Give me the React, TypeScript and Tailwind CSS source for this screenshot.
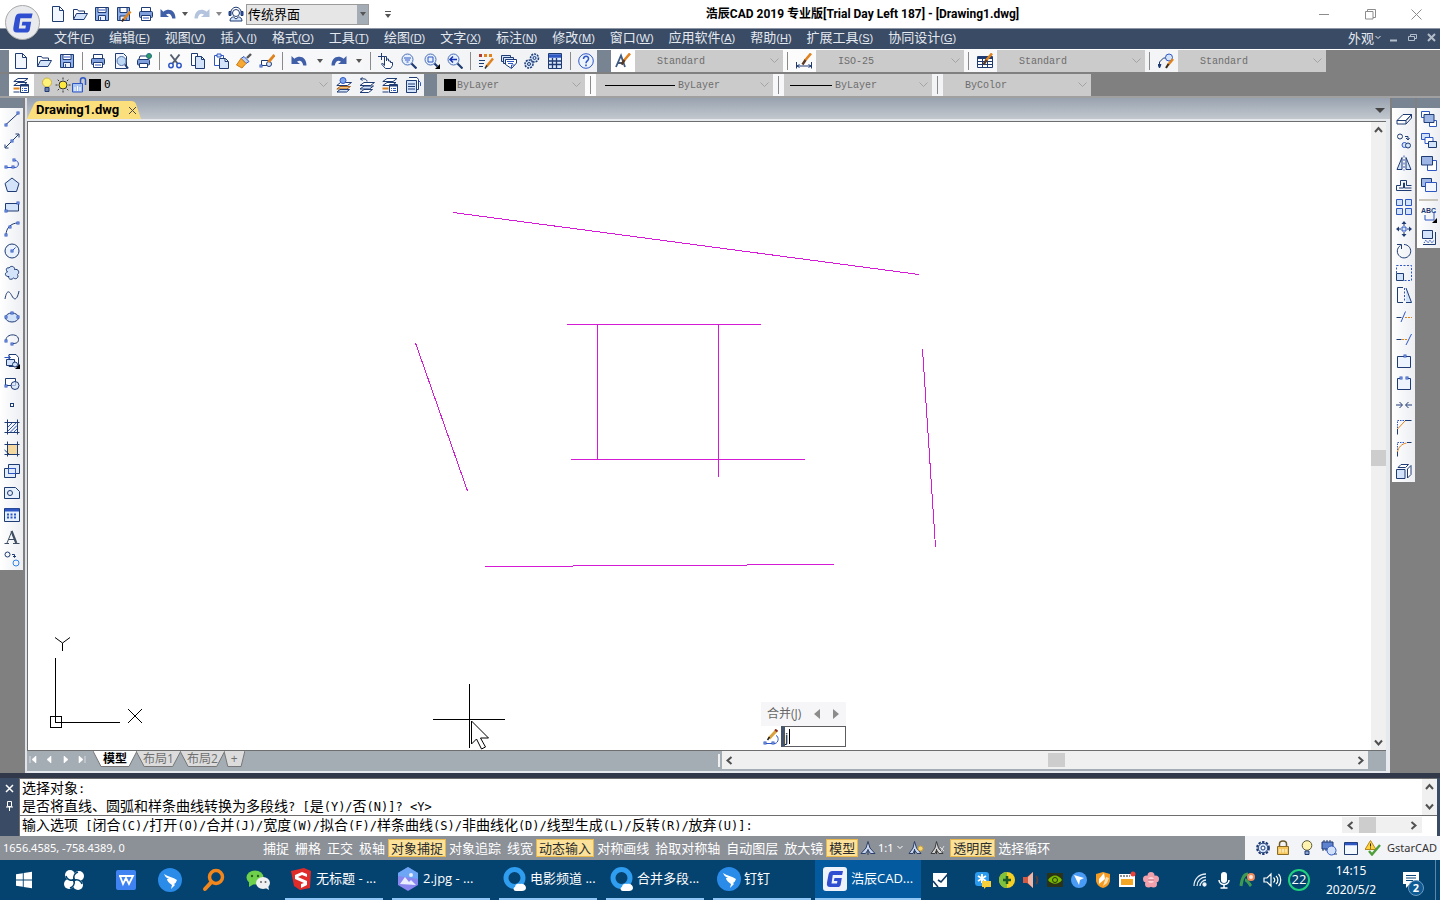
import type { ReactNode } from "react";

// Shared icon colors
const N = "#1f3b73"; // navy outline
const B = "#2f57c4"; // bright blue
const L = "#d3e3fa"; // light fill
const O = "#e0821e"; // orange

function Icon({ name, size = 16 }: { name: string; size?: number }) {
  return (
    <svg
      width={size}
      height={size}
      viewBox="0 0 16 16"
      fill="none"
      stroke={N}
      className="shrink-0"
      aria-hidden="true"
    >
      {ICONS[name]}
    </svg>
  );
}

const node = (x: number, y: number) => (
  <rect x={x - 1} y={y - 1} width="2" height="2" stroke={B} fill="#fff" />
);

const brush = (
  <>
    <path d="M15 0.5L9 7.5" stroke={O} strokeWidth="2.6" />
    <path d="M9.5 7L6.5 11.5" stroke="#5a3a22" strokeWidth="2.4" />
  </>
);

const layers = (
  <>
    <path d="M4.5 5.5h11l-4 3H0.8z" fill="#fff" />
    <path d="M4 9.5h10.5l-3.6 2.5H0.8z" fill="#f5c486" stroke="#a8631c" />
    <path d="M4 12.5h9.5l-3 2.5H1z" fill={L} />
  </>
);

const UNDO = "M0.5 3v8h8.5L6 8.8c2.5-1.8 5-1.2 6.3 3.7h3.2C15.500 4.500 9 1.500 3.400 5.700z";
const REDO = "M15.5 3v8H7L10 8.800c-2.500-1.800-5-1.200-6.300 3.700H0.500C0.500 4.500 7 1.500 12.600 5.700z";

const ICONS: Record<string, ReactNode> = {
  new: <path d="M2.5 0.5h7l4 4v11h-11z M9.5 0.5v4h4" fill="#f2f7ff" />,
  open: (
    <>
      <path d="M1.5 13.5v-10h4l1 1.5h6v2.5" fill="#fff" />
      <path d="M1.5 13.5l3-6h11l-3.5 6z" fill={L} />
    </>
  ),
  save: (
    <>
      <path d="M1.5 1.5h13v13h-13z" fill="#8fb0ea" />
      <path d="M4 1.5h8v5H4z" fill="#fff" />
      <path d="M4.5 9.5h7v5h-7z" fill="#e9effb" />
      <path d="M6.5 11v3M5 4h6" stroke={B} />
    </>
  ),
  saveas: (
    <>
      <path d="M1.5 1.5h12v13h-12z" fill="#8fb0ea" />
      <path d="M4 1.5h7v5H4z" fill="#fff" />
      <path d="M4 10h6v4.5h-6z" fill="#e9effb" />
      <path d="M14.5 5.5l-7 8" stroke={O} strokeWidth="2.6" />
      <path d="M7.5 13l-1.5 2.5" stroke="#3a2a1c" strokeWidth="2" />
    </>
  ),
  print: (
    <>
      <path d="M3.5 6V1.5h9V6" fill="#fff" />
      <rect x="1.5" y="5.5" width="13" height="6" rx="1" fill="#7f9fdc" />
      <path d="M3.5 9.5h9v5h-9z" fill="#fff" />
      <path d="M5 12h6" stroke={B} />
    </>
  ),
  preview: (
    <>
      <path d="M2.5 0.5h8l3 3v12h-11z" fill="#f2f7ff" />
      <circle cx="8.5" cy="8" r="4.5" fill="#bcd8f5" stroke="#5573a8" />
      <path d="M12 11.5l3 4" stroke={N} strokeWidth="2" />
    </>
  ),
  publish: (
    <>
      <path d="M3 6l1-3h8l1 3" fill="#fff" />
      <rect x="1.5" y="6.5" width="12" height="5.5" rx="1" fill="#7f9fdc" />
      <path d="M3.5 10.5h8v4h-8z" fill="#fff" />
      <circle cx="13" cy="3" r="2.5" fill="#2e9c5a" stroke="#1f6b8f" />
    </>
  ),
  cut: (
    <>
      <path d="M3.5 1.5l7 9M12.5 1.5l-7 9" stroke="#555f70" strokeWidth="2" />
      <circle cx="4" cy="12.5" r="2.2" stroke={B} strokeWidth="1.5" />
      <circle cx="12" cy="12.5" r="2.2" stroke={B} strokeWidth="1.5" />
    </>
  ),
  copy: (
    <>
      <path d="M1.5 0.5h6v12h-6z" fill="#fff" />
      <path d="M5.5 3.5h6l3 3v9h-9z M11.5 3.5v3h3" fill={L} />
    </>
  ),
  paste: (
    <>
      <path d="M1.5 2.5h9v10h-9z" fill="#fff" stroke={B} />
      <path d="M4 1h4v3H4z" fill={L} stroke={B} />
      <path d="M6.5 5.5h6l3 3v7h-9z M12 5.5v3h3" fill={L} />
    </>
  ),
  match: (
    <>
      <path d="M15 1l-4 4" stroke="#555" strokeWidth="2.4" />
      <path d="M8 3.5l5 5-3 2-5-5z" fill="#bcd0f2" stroke={B} />
      <path d="M5 5.5l5 5-4 4.5-5.5-3z" fill="#f6a935" stroke="#c97c15" />
    </>
  ),
  block: (
    <>
      <path d="M2.5 7.5h8v5h-8z" fill="#fff" />
      <circle cx="10" cy="11" r="2.5" fill={L} />
      <path d="M15.5 2l-6 7" stroke={O} strokeWidth="2.8" />
      {node(2, 13)}
    </>
  ),
  undo: <path d={UNDO} fill="#3f5fa8" stroke="none" />,
  redo: <path d={REDO} fill="#3f5fa8" stroke="none" />,
  redoOff: <path d={REDO} fill="#b4c3de" stroke="none" />,
  user: (
    <>
      <path d="M2.5 8C2.5-1 13.5-1 13.5 8" />
      <circle cx="8" cy="7" r="3.5" fill="#fff" />
      <path d="M1 5.5h2v4H1zM13 5.5h2v4h-2z" fill={B} />
      <path d="M2 15c0-3 2-4 3.5-4l2.5 2 2.5-2c1.5 0 3.5 1 3.5 4z" fill={L} />
    </>
  ),
  pan: (
    <>
      <path d="M3.5 0v7M0 3.5h7" />
      <path d="M6.5 12.5V3.5h2V8V6h2v2h2v1.5h2v3l-2 3h-5l-4-4.5 1-1z" fill="#fff" />
    </>
  ),
  zoomrt: (
    <>
      <circle cx="6.5" cy="6.5" r="5.5" fill="#e6f0fd" stroke="#4a6fb5" />
      <path d="M10.5 10.5l5 5" stroke={N} strokeWidth="2.2" />
      <path d="M3 5h7M4 7h5M5.5 9h2" stroke={B} />
    </>
  ),
  zoomwin: (
    <>
      <circle cx="6.5" cy="6.5" r="5.5" fill="#e6f0fd" stroke="#4a6fb5" />
      <path d="M4 4h5v5H4z" stroke={B} />
      <path d="M10.5 10.5l3 3" strokeWidth="2.2" />
      <path d="M16 11v5h-5z" fill="#000" stroke="none" />
    </>
  ),
  zoomprev: (
    <>
      <circle cx="6.5" cy="6.5" r="5.5" fill="#e6f0fd" stroke="#4a6fb5" />
      <path d="M10.5 10.5l5 5" stroke={N} strokeWidth="2.2" />
      <path d="M3 6.5h7M6 3.5l-3 3 3 3" stroke="#1733b5" strokeWidth="1.5" />
    </>
  ),
  props: (
    <>
      <path d="M1 1h3v3H1z" fill="#b33c2e" stroke="none" />
      <path d="M6 1h3v3H6zM11 1h3v3h-3z" fill={O} stroke="none" />
      <path d="M1 7.5h6M1 10.5h5M1 13.5h4" />
      <path d="M15 5.5l-6.500 8" stroke={O} strokeWidth="2.5" />
      <path d="M9 12.5l-2 3" stroke="#333" strokeWidth="1.5" />
    </>
  ),
  sheets: (
    <>
      <path d="M0.5 2.5h9v6h-9z" fill={L} />
      <path d="M2.5 4.5h10v6h-10z" fill={L} />
      <path d="M4.5 6.500h11v3.500l-5 5.500-6-4z" fill="#fff" />
      <path d="M6 8.5h7M7 10.5h5M10.500 15v-3h3" stroke={B} />
    </>
  ),
  gears: (
    <>
      <circle cx="10.5" cy="5" r="4" strokeDasharray="2 1" strokeWidth="1.5" fill={L} />
      <circle cx="10.5" cy="5" r="1.5" />
      <circle cx="5" cy="11" r="4" strokeDasharray="2 1" strokeWidth="1.5" fill={L} />
      <circle cx="5" cy="11" r="1.5" />
    </>
  ),
  calc: (
    <>
      <path d="M1.5 0.5h13v15h-13z" fill="#dbe7fa" />
      <path d="M2 3h12" strokeWidth="3.5" stroke={B} />
      <path d="M2 8h12M2 11.5h12M5.5 5v10M9.5 5v10" strokeWidth="1.3" />
    </>
  ),
  help: (
    <>
      <circle cx="8" cy="8" r="7.3" fill="#eef4fe" stroke={B} />
      <path d="M5.5 6c0-4 5.5-3.5 5 0-.3 2-2.5 2-2.5 4.2M8 11.5v1.800" stroke={B} strokeWidth="1.6" />
    </>
  ),
  textstyle: (
    <>
      <path d="M1 14L6 2.5 10 14M3 10h6" strokeWidth="1.8" stroke="#3d5a80" />
      {brush}
    </>
  ),
  dimstyle: (
    <>
      {brush}
      <path d="M0.5 9v6.5M15.5 9v6.5M1 13h14M3.5 11.5L1 13l2.5 1.5M12.5 11.5L15 13l-2.5 1.5" />
    </>
  ),
  tablestyle: (
    <>
      <path d="M0.5 3.5h15v11h-15z" fill="#fff" />
      <path d="M1 4.5h14" strokeWidth="3" />
      <path d="M1 8.5h14M1 11.5h14M5.5 5v10M10.5 5v10" />
      {brush}
    </>
  ),
  leader: (
    <>
      <path d="M1.5 14V9l4-4h3" />
      <circle cx="11" cy="4.5" r="3.5" fill={L} stroke={B} />
      <path d="M15 6L10 12" stroke={O} strokeWidth="2.6" />
      <path d="M10.5 11l-2.5 4" stroke="#3a2a1c" strokeWidth="2" />
      <path d="M0 11.5L1.5 15 3 11.5z" fill={N} />
    </>
  ),
  layerprop: (
    <>
      <path d="M5 1.5h10l-4 3H0.8z" fill="#fff" />
      <path d="M5 5.5h9l-4 3H0.8z" fill="#fff" />
      <path d="M0.5 11.5h6" stroke={O} strokeWidth="2" />
      <path d="M0.5 15h6" stroke={N} />
      <path d="M7.5 7.5h8v8h-8z" fill="#fff" />
      <path d="M8 8.5h7" strokeWidth="2" />
      <path d="M9 11.5h1M11 11.5h3M9 13.5h1M11 13.5h3" stroke={B} />
    </>
  ),
  bulb: (
    <>
      <circle cx="8" cy="5.5" r="4.5" fill="#fff27a" stroke="#c9b04a" />
      <path d="M6 10.5h4v4H6z" fill="#6d7fa8" />
    </>
  ),
  bulbSm: (
    <>
      <circle cx="8" cy="5.5" r="4.8" fill="#fff3b0" stroke="#5a5a3a" />
      <path d="M6 11h4v3.5H6z" fill="#8ea4d4" />
    </>
  ),
  sun: (
    <>
      <circle cx="8" cy="8" r="4" fill="#ffe83d" stroke="#333" />
      <path d="M8 0.5v2M8 13.5v2M0.5 8h2M13.5 8h2M2.7 2.7l1.4 1.4M11.9 11.9l1.4 1.4M2.7 13.3l1.4-1.4M11.9 4.1l1.4-1.4" stroke="#333" />
    </>
  ),
  unlock: (
    <>
      <path d="M9.5 6.5V3c0-3 5-3 5 0v5" stroke={B} strokeWidth="1.5" />
      <path d="M1.5 6.5h10v8.5h-10z" fill="#a9c6f3" stroke={B} />
      <path d="M4 10v4M6.5 9v5M9 10v4" stroke="#fff" />
    </>
  ),
  laycur: (
    <>
      {layers}
      <circle cx="7" cy="3.5" r="3" fill="#7ea5ea" stroke={B} />
    </>
  ),
  layprev: (
    <>
      <path d="M5 5.5h10.5l-4 3H1z" fill="#fff" />
      <path d="M5 9h9.5l-4 3H1z" fill={L} />
      <path d="M5 12.5h8.5l-4 3H1z" fill="#fff" />
      <path d="M8 4.5C8 2 5 1.5 1.5 2M3.5 0.5l-2 1.5 2 1.5" />
    </>
  ),
  laystate: (
    <>
      <path d="M4 0.5h8l1.5 2v10h-3" fill="#fff" />
      <path d="M1.5 3.5h10v12h-10z" fill={L} />
      <path d="M3 7h7M3 9.5h7M3 12h7" />
      <path d="M14 4l1.5 1.5V9" stroke={B} />
    </>
  ),
  // draw toolbar
  line: (<><path d="M2 13.5L14 2.5" />{node(2, 14)}{node(14, 2)}</>),
  xline: (<><path d="M1.5 14.5L14.5 1.5M1 11.5v3.5h3.5M11.5 1H15v3.5" />{node(8, 8)}</>),
  pline: (<><path d="M2 12.5h9c4.5 0 4.500-7 0-7H9.5" stroke={B} />{node(2, 12)}{node(9, 12)}{node(10, 5)}</>),
  polygon: <path d="M8 1L15 6.5 12.5 14.5h-9L1 6.5z" fill={L} />,
  rect: (<><path d="M1.5 4.5h13v7.5h-13z" fill={L} />{node(2, 12)}{node(14, 4)}</>),
  arc: (<><path d="M2 14C2 7 7 2 14 2" />{node(2, 14)}{node(6, 6)}{node(14, 2)}</>),
  circle: (<><circle cx="8" cy="8" r="7" fill="#eaf2fd" /><path d="M8 8l3.5-3.5" stroke={B} />{node(8, 8)}</>),
  cloud: <path d="M5 3c2-3 6-1.5 5.5 1.5 4-1 5.5 3 3 5 1.5 3-1.5 5.5-4 3.5-2 2.5-6 1-4.5-1.5C0.5 12 0.5 7 3.5 7 1 4.5 3 2 5 3z" fill={L} />,
  spline: <path d="M1 12C3 1 6 5 8 9s5 5 7-5" />,
  ellipse: (<><ellipse cx="8" cy="8.5" rx="6.5" ry="4.5" fill={L} />{node(2, 8)}{node(14, 8)}{node(8, 4)}</>),
  ellarc: (<><path d="M2 9c0-6.5 12.5-7 12.5-.5 0 3.5-3 4-5.5 4" />{node(2, 10)}{node(8, 13)}</>),
  insert: (
    <>
      <path d="M5 1.5h7l2.5 3v9H5z" fill="#fff" />
      <path d="M2.5 6.5h8v6h-8z" fill={L} />
      <path d="M0.5 4.5h6M4.5 2.5l2 2-2 2" stroke={B} />
      <circle cx="11" cy="11.5" r="2.5" fill={L} />
      <path d="M16 11v5h-5z" fill="#000" stroke="none" />
    </>
  ),
  mkblock: (<><path d="M1.5 3.5h10v7h-10z" fill="#fff" /><circle cx="11" cy="10.5" r="4" fill={L} fillOpacity="0.7" />{node(2, 11)}</>),
  point: <rect x="6.5" y="6.5" width="3" height="3" fill="#fff" />,
  hatch: (
    <>
      <path d="M3.5 0.5v15M13.5 0.5v15M0.5 3.5h15M0.5 13.5h15" />
      <path d="M4 8l4-4M4 12l8-8M6.5 13L13 6.5M10 13l3-3" stroke={B} />
    </>
  ),
  gradient: (<><path d="M3.5 3.5h10v10h-10z" fill="#f3d9a0" /><path d="M3.5 0.5v15M13.5 0.5v15M0.5 3.5h15M0.5 13.5h15M0.5 9l5.5 5" /></>),
  region: (<><path d="M4.5 1.5h11v9h-11zM0.5 5.5h11v9h-11z" fill={L} fillOpacity="0.6" /><path d="M4.5 5.5h7v5h-7z" stroke={B} /></>),
  wipeout: (<><path d="M0.5 2.5h11l4 4v7h-15z" fill="#e6f0fd" /><circle cx="6" cy="8" r="2.5" /></>),
  table: (
    <>
      <path d="M0.5 1.5h15v13h-15z" fill="#e6f0fd" />
      <path d="M1 3h14" strokeWidth="3" stroke={B} />
      <path d="M3 7.5h10M3 10.5h10" strokeWidth="2" stroke={B} strokeDasharray="2 1.5" />
    </>
  ),
  mtext: (
    <>
      <path d="M0.5 14.500h4.500M9 14.500h6.500M3 14L7.500 3M5 10.500h5.500" stroke="#3d4d63" />
      <path d="M7.500 2l4.800 12" strokeWidth="2.200" stroke="#3d4d63" />
    </>
  ),
  addsel: (<><circle cx="3.5" cy="3.5" r="2.5" /><path d="M8 3.5h2.5V6M9 5l1.5 1.5L12 5" /><circle cx="12" cy="12" r="3" stroke="#2f86e8" /></>),
  // modify toolbar
  erase: (<><path d="M1 9.500L7 3.500h8.500l-5.500 6zM1 9.500V13h9l5.500-6V3.500L10 9.500V13" fill="#fff" /></>),
  copyobj: (<><circle cx="4" cy="3.5" r="2.5" /><path d="M9 3.5h3V6.5M10 5l2 2 1.5-2" /><circle cx="8.5" cy="12" r="2.5" fill={L} stroke={B} /><circle cx="12" cy="12.5" r="2.5" fill={L} /></>),
  mirror: (<><path d="M6 2.5v12H1zM10 2.5v12h5z" fill={L} /><path d="M8 0.5v15" strokeDasharray="2 1.5" stroke={B} /></>),
  offset: (<><path d="M0.5 13.500h15M0.500 13.500v-5h4v-5h6v5h5M3 11h4.500V6h1v5h7" /></>),
  array: <path d="M0.5 0.5h6v6h-6zM9.5 0.5h6v6h-6zM0.5 9.5h6v6h-6zM9.5 9.5h6v6h-6z" fill={L} stroke={B} />,
  move: (
    <>
      <path d="M6 6h4v4H6z" fill={L} stroke={B} />
      <path d="M8 0l2.5 3h-5zM8 16l2.5-3h-5zM0 8l3-2.5v5zM16 8l-3-2.5v5z" fill={N} stroke="none" />
      <path d="M8 2v3M8 11v3M2 8h3M11 8h3" />
    </>
  ),
  rotate: <path d="M4.500 2.500a6.700 6.700 0 1 0 3.500-1M1 1.500h4.500V6" />,
  scale: (<><path d="M0.5 0.5h15v15h-15z" strokeDasharray="2 1.5" stroke={B} /><path d="M0.5 8.5h7v7h-7z" fill={L} /></>),
  stretch: (<><path d="M7 0.5H1.5v15H7" /><path d="M8.5 1v14" strokeDasharray="2 1.5" stroke={B} /><path d="M10 1l5.5 14.5H10" fill={L} /></>),
  trim: (<><path d="M0.5 8.5h5" /><path d="M9 8.5h7" stroke={O} strokeDasharray="2 1" /><path d="M9.5 2.5L5 13" stroke={B} /></>),
  extend: (<><path d="M0.5 8.5h5" /><path d="M6 8.5h5" stroke={O} strokeDasharray="2 1" /><path d="M15.5 3L10 14" stroke={B} /></>),
  breakpt: (<><path d="M1.5 3.5h13v11h-13z" fill="#eef4fe" />{node(9, 3)}</>),
  breakobj: (<><path d="M4 3.5H1.5v11h13v-11H12" fill="#eef4fe" />{node(5, 3)}{node(11, 3)}</>),
  join: <path d="M0 8h6M10 8h6M3.5 5l3 3-3 3M12.5 5l-3 3 3 3" />,
  chamfer: (<><path d="M1.5 15.5V10M9 1.5h6.5" /><path d="M1.5 9V1.5H9" strokeDasharray="1.5 1" stroke={B} /><path d="M1.5 10L9 2" stroke={O} /></>),
  fillet: (<><path d="M1.5 15.5V10M11 1.5h4.5" /><path d="M1.5 9V1.5H9" strokeDasharray="1.5 1" stroke={B} /><path d="M1.5 11c1-5 4-8 9-9" stroke={O} /></>),
  explode: (<><path d="M0.5 6.5h8.5v9H0.5z" fill={L} /><path d="M2 4.5l3-3h7.5l-3 3zM11.5 6l3.5-3.5v9L11.5 15z" fill="#fff" /></>),
  // draw order
  front: (<><path d="M0.5 0.5h8v6h-8zM8.5 9.5h7v6h-7z" fill="#fff" stroke={B} /><path d="M3 3.5h10v8H3z" fill="#9db6e6" /></>),
  back: (<><path d="M0.5 0.5h8v6h-8z" fill={L} stroke={B} /><path d="M4 4.5h8v6H4z" fill="#fff" stroke={B} /><path d="M7.5 8.5h8v6h-8z" fill={L} /></>),
  above: (<><path d="M6.5 5.5h9v10h-9z" fill="#fff" stroke={B} /><path d="M0.5 1.5h11v8.5h-11z" fill="#9db6e6" /></>),
  under: (<><path d="M0.5 1.5h10v8h-10z" fill="#9db6e6" /><path d="M4.5 5.5h11v9h-11z" fill="#f2f7ff" stroke={B} /></>),
  texttop: (
    <>
      <text x="0" y="6" fontSize="7" fontWeight="bold" fill={N} stroke="none" fontFamily="Liberation Sans, sans-serif">ABC</text>
      <path d="M4 8v5h9V5h2" stroke={B} />
      <path d="M16 11v5h-5z" fill="#000" stroke="none" />
    </>
  ),
  hatchback: (<><path d="M1.5 1.5h10v8h-10z" fill={L} /><path d="M14.5 3v12.5H2" /><path d="M3 14l2-3 2 3 2-3 2 3 2-3" stroke={B} strokeDasharray="1.5 1" /></>),
  // status bar
  anno: <path d="M8 1.5L6 8l-5 5.5h4.5L8 10l2.5 3.5H15L10 8zM8 9v6" fill="#c9d7ee" stroke="#2c3f66" />,
  annobulb: (<><path d="M6.5 1.5L5 8l-4 5.5h4L6.5 10 9 13.5h4L8.5 8zM6.5 9v5" fill="#c9d7ee" stroke="#2c3f66" /><circle cx="12.5" cy="8.5" r="2.5" fill="#f7d774" stroke="#c9a13c" /></>),
  annoauto: (<><path d="M6.5 1.5L5 8l-4 5.5h4L6.5 10 9 13.5h4L8.5 8zM6.5 9v5" fill="#d4d4d4" stroke="#3c3c3c" /><path d="M10 7l4 4M10 13l4-7" stroke="#ddd" /></>),
  cog: (<><circle cx="8" cy="8" r="6" strokeDasharray="2.5 1.3" strokeWidth="1.8" /><circle cx="8" cy="8" r="4.8" fill={L} /><circle cx="8" cy="8" r="2" fill="#fff" /></>),
  lock: (<><path d="M4.5 7V4c0-4 7-4 7 0v3" stroke="#6b5a2c" strokeWidth="1.5" /><path d="M2.5 6.5h11v8h-11z" fill="#f6c65a" stroke="#8b6b22" /><path d="M8 9v3.5M5 9v3.5M11 9v3.5" stroke="#fff" /></>),
  hw: (<><path d="M1 2h11v7H1z" fill="#5d83cf" /><path d="M3 0v2M6 0v2M9 0v2M2 11v-2M5 11v-2" /><circle cx="10.5" cy="10.5" r="4.5" fill="#cfe0f8" stroke={B} /><path d="M13 14h3" /></>),
  clean: (<><path d="M1.5 2.5h13v12h-13z" fill="#f4f8ff" /><path d="M2 4h12" strokeWidth="2.5" stroke={B} /></>),
  warn: (<><path d="M5.5 0.5L11 9.5H0z" fill="#ffd23d" stroke="#b5841a" /><path d="M5.5 3.5v3M5.5 7.5v1" stroke="#222" /><path d="M4 11l3 3.5L15 5" stroke="#4f9e3c" strokeWidth="2.4" /></>),
  pencil: (<><path d="M13.5 1.5L6 9.5" stroke="#d9a13b" strokeWidth="3" /><path d="M12 0.5l2.5 2" stroke="#8b2f1e" strokeWidth="2" /><path d="M6.5 8l-2 3" stroke="#222" strokeWidth="1.5" /><path d="M2 14.5h10c4-1 4-7 1-8" stroke={B} />{node(2, 14)}{node(10, 14)}</>),
};

/* ---------- small shared pieces ---------- */

function Tool({ name, size }: { name: string; size?: number }) {
  return (
    <button aria-label={name} className="flex h-[22px] w-[23px] shrink-0 items-center justify-center">
      <Icon name={name} size={size} />
    </button>
  );
}

function Sep() {
  return (
    <span className="flex h-[22px] w-2 shrink-0 items-center justify-center">
      <span className="h-[18px] w-px bg-[#8a8a8a]" />
    </span>
  );
}

function Drop({ className = "text-[#555]" }: { className?: string }) {
  return (
    <svg width="6" height="4" viewBox="0 0 6 4" className={className} aria-hidden="true">
      <path d="M0 0h6L3 4z" fill="currentColor" />
    </svg>
  );
}

function Chevron({ dir, className = "text-[#505050]" }: { dir: "up" | "down" | "left" | "right"; className?: string }) {
  const d = { up: "M1 6l3.5-4L8 6", down: "M1 2.5l3.5 4L8 2.5", left: "M6.5 1l-4 3.5 4 3.5", right: "M2.5 1l4 3.5-4 3.5" }[dir];
  return (
    <svg width="9" height="9" viewBox="0 0 9 9" fill="none" className={className} aria-hidden="true">
      <path d={d} stroke="currentColor" strokeWidth="2" />
    </svg>
  );
}

function ComboArrow() {
  return (
    <svg width="9" height="6" viewBox="0 0 9 6" fill="none" className="shrink-0" aria-hidden="true">
      <path d="M0.5 0.5l4 4 4-4" stroke="#a3a3a3" />
    </svg>
  );
}

function Combo({ label, value, pad, wide, children }: { label: string; value: string; pad?: string; wide?: boolean; children?: ReactNode }) {
  return (
    <div className={`flex h-[22px] shrink-0 items-center bg-[#cbcbcb] pr-1 ${wide ? "w-[177px]" : "w-[148px]"}`}>
      {children}
      <select
        aria-label={label}
        className={`h-full min-w-0 flex-1 appearance-none bg-transparent font-['Liberation_Mono',monospace] text-[10px] text-[#6d6d6d] ${pad ?? ""}`}
      >
        <option>{value}</option>
      </select>
      <ComboArrow />
    </div>
  );
}

/* ---------- title bar + menu ---------- */

const G_MARK =
  "M18 2H7.5C5 2 4 3.2 3.5 5.5L2 13.5C1.5 16.5 2.5 18 5 18h7.5c1.8 0 2.8-.8 3.2-2.6L16.800 9H9.5l-.6 3h3.5l-.4 2.5H6.5L7.800 6h9.3z";

function TitleBar() {
  return (
    <header className="flex h-7 items-center bg-white">
      <div className="flex w-[424px] shrink-0 items-center pl-[47px]">
        {["new", "open", "save", "saveas", "print", "undo"].map((n) => (
          <button key={n} aria-label={n} className="flex h-6 w-[22px] items-center justify-center">
            <Icon name={n} />
          </button>
        ))}
        <span className="flex w-3 justify-center"><Drop /></span>
        <button aria-label="redo" className="flex h-6 w-[22px] items-center justify-center">
          <Icon name="redoOff" />
        </button>
        <span className="flex w-3 justify-center"><Drop className="text-[#888]" /></span>
        <button aria-label="workspace" className="flex h-6 w-[21px] items-center justify-center">
          <Icon name="user" />
        </button>
        <div className="flex h-[21px] w-[123px] items-center border border-[#9b9b9b] bg-[#e6e6e6]">
          <select aria-label="工作空间" className="h-full min-w-0 flex-1 appearance-none bg-transparent pl-px text-[13px] leading-4 text-black">
            <option>传统界面</option>
          </select>
          <span className="flex h-full w-[11px] items-center justify-center bg-[#a4adb6]"><Drop /></span>
        </div>
        <span className="ml-4 flex flex-col items-center gap-[2px]">
          <span className="h-px w-[6px] bg-[#555]" />
          <Drop />
        </span>
      </div>
      <h1 className="flex-1 text-center font-['Roboto','Noto_Sans_CJK_SC',sans-serif] text-xs font-bold whitespace-nowrap text-black">
        浩辰CAD 2019 专业版[Trial Day Left 187] - [Drawing1.dwg]
      </h1>
      <div className="flex w-[139px] shrink-0 text-[#8c8c8c]">
        <button aria-label="最小化" className="flex h-6 w-[46px] items-center justify-center">
          <svg width="11" height="11" fill="none" stroke="currentColor"><path d="M0 5.5h10" /></svg>
        </button>
        <button aria-label="还原" className="flex h-6 w-[46px] items-center justify-center">
          <svg width="11" height="11" fill="none" stroke="currentColor"><path d="M0.5 2.5h7.500v7.500H0.500zM2.500 2.500v-2h8v8H8" /></svg>
        </button>
        <button aria-label="关闭" className="flex h-6 w-[46px] items-center justify-center">
          <svg width="11" height="11" fill="none" stroke="currentColor"><path d="M0.5 0.5l10 10M10.5 0.5l-10 10" /></svg>
        </button>
      </div>
    </header>
  );
}

const MENUS: [string, string][] = [
  ["文件", "F"], ["编辑", "E"], ["视图", "V"], ["插入", "I"], ["格式", "O"],
  ["工具", "T"], ["绘图", "D"], ["文字", "X"], ["标注", "N"], ["修改", "M"],
  ["窗口", "W"], ["应用软件", "A"], ["帮助", "H"], ["扩展工具", "S"], ["协同设计", "G"],
];

function MenuBar() {
  return (
    <nav className="flex h-[22px] items-center border-t border-b border-t-[#8d97a5] border-b-white bg-[#3a4b65] pr-1 pb-[3px] pl-[54px] text-[13px] leading-4 text-[#e4e9f0]">
      <div className="flex gap-[15px]">
        {MENUS.map(([label, key]) => (
          <button key={label} className="whitespace-nowrap">
            {label}
            <span className="font-['Liberation_Sans',sans-serif] text-[11px]">(<u>{key}</u>)</span>
          </button>
        ))}
      </div>
      <div className="ml-auto flex items-center">
        <button className="flex items-center gap-px">
          外观
          <svg width="6" height="5" fill="none" stroke="currentColor" aria-hidden="true"><path d="M0.5 1l2.5 2.5L5.5 1" /></svg>
        </button>
        <div className="ml-2 flex gap-[10px] text-[#b4bdca]">
          <button aria-label="最小化文档"><svg width="9" height="9" fill="none" stroke="currentColor"><path d="M1 7.5h7" strokeWidth="2" /></svg></button>
          <button aria-label="还原文档"><svg width="9" height="9" fill="none" stroke="currentColor"><path d="M0.5 3.5h6v4h-6zM2.5 3V1.5h6v4H7" /></svg></button>
          <button aria-label="关闭文档"><svg width="9" height="9" fill="none" stroke="currentColor"><path d="M1 1l7 7M8 1L1 8" strokeWidth="2" /></svg></button>
        </div>
      </div>
    </nav>
  );
}

/* ---------- toolbars ---------- */

const BAR = "flex h-[22px] shrink-0 items-center bg-linear-to-r from-white to-[#f0f1f4]";

function StandardBar() {
  return (
    <div className="flex h-[22px]">
      <span className="w-[9px] shrink-0 bg-[#788492]" />
      <div className={BAR}>
        <Tool name="new" /><Tool name="open" /><Tool name="save" /><Sep />
        <Tool name="print" /><Tool name="preview" /><Tool name="publish" /><Sep />
        <Tool name="cut" /><Tool name="copy" /><Tool name="paste" /><Tool name="match" /><Tool name="block" /><Sep />
        <button aria-label="undo" className="flex w-[26px] justify-center"><Icon name="undo" /></button>
        <span className="flex w-[15px] justify-center"><Drop /></span>
        <button aria-label="redo" className="flex w-6 justify-center"><Icon name="redo" /></button>
        <span className="flex w-[15px] justify-center"><Drop /></span>
        <Sep />
        <Tool name="pan" /><Tool name="zoomrt" /><Tool name="zoomwin" /><Tool name="zoomprev" /><Sep />
        <Tool name="props" /><Tool name="sheets" /><Tool name="gears" /><Tool name="calc" /><Sep />
        <Tool name="help" />
      </div>
      <span className="w-[14px] shrink-0 bg-[#788492]" />
      <div className={BAR}>
        <Tool name="textstyle" />
        <span className="w-px" />
        <Combo label="文字样式" value="Standard" pad="pl-[22px]" />
        <Sep /><span className="w-px" /><Tool name="dimstyle" /><span className="w-px" />
        <Combo label="标注样式" value="ISO-25" pad="pl-[22px]" />
        <Sep /><span className="w-px" /><Tool name="tablestyle" /><span className="w-px" />
        <Combo label="表格样式" value="Standard" pad="pl-[22px]" />
        <Sep /><span className="w-px" /><Tool name="leader" /><span className="w-px" />
        <Combo label="引线样式" value="Standard" pad="pl-[22px]" />
      </div>
    </div>
  );
}

function LayerBar() {
  return (
    <div className="flex h-[22px]">
      <span className="w-[9px] shrink-0 bg-[#788492]" />
      <div className={BAR}>
        <Tool name="layerprop" />
        <div className="ml-[2px] flex h-[22px] w-[298px] items-center bg-[#cbcbcb] pr-1 pl-[5px]">
          <Icon name="bulb" />
          <Icon name="sun" />
          <Icon name="unlock" />
          <span className="ml-[2px] h-3 w-3 bg-black" />
          <select aria-label="图层" className="h-full flex-1 appearance-none bg-transparent pl-[3px] font-['DejaVu_Sans_Mono',monospace] text-[11px] text-black">
            <option>0</option>
          </select>
          <ComboArrow />
        </div>
        <Tool name="laycur" /><Tool name="layprev" /><Tool name="layerprop" /><Tool name="laystate" />
      </div>
      <span className="w-[13px] shrink-0 bg-[#788492]" />
      <div className={BAR}>
        <Combo label="颜色" value="ByLayer" pad="pl-px">
          <span className="ml-[7px] h-3 w-3 bg-black" />
        </Combo>
        <span className="flex w-[11px] justify-center"><Sep /></span>
        <Combo label="线型" value="ByLayer" pad="pl-[3px]" wide>
          <span className="ml-[9px] h-px w-[70px] bg-black" />
        </Combo>
        <span className="flex w-[11px] justify-center"><Sep /></span>
        <Combo label="线宽" value="ByLayer" pad="pl-[3px]">
          <span className="ml-[6px] h-px w-[42px] bg-black" />
        </Combo>
        <span className="flex w-[11px] justify-center"><Sep /></span>
        <Combo label="打印样式" value="ByColor" pad="pl-[22px]" />
      </div>
    </div>
  );
}

function SideBar({ tools }: { tools: string[] }) {
  return (
    <div className="w-[23px] shrink-0">
      <div className="h-[10px] bg-[#788492]" />
      <div className="flex flex-col bg-linear-to-r from-white to-[#eceef2]">
        {tools.map((t, i) =>
          t === "|" ? <span key={i} className="mx-[2px] my-[3px] h-[2px] bg-[#c9c5bd]" /> : <Tool key={i} name={t} />
        )}
      </div>
    </div>
  );
}

const DRAW = ["line", "xline", "pline", "polygon", "rect", "arc", "circle", "cloud", "spline", "ellipse", "ellarc", "insert", "mkblock", "point", "hatch", "gradient", "region", "wipeout", "table", "mtext", "addsel"];
const MODIFY = ["erase", "copyobj", "mirror", "offset", "array", "move", "rotate", "scale", "stretch", "trim", "extend", "breakpt", "breakobj", "join", "chamfer", "fillet", "explode"];
const ORDER = ["front", "back", "above", "under", "|", "texttop", "hatchback"];

/* ---------- document ---------- */

function Canvas() {
  return (
    <div className="relative min-w-0 flex-1 overflow-hidden bg-white">
      <svg className="absolute h-full w-full" fill="none" shapeRendering="crispEdges" aria-label="Drawing1">
        <path
          stroke="#d41ad4"
          d="M425 90.5L891 152.5M539 202.5h194M569.5 202v135M690.5 202v153M543 337.5h234M387.5 221L439.5 369M894.5 227L907.5 425M457 444.5h88M545 443.5h174M719 442.5h87"
        />
        <path stroke="#000" d="M405 597.5h72M441.5 562v64" />
        <path d="M443.500 599v23l5-5 5 10 4-2-5-9h8z" stroke="#000" fill="#fff" shapeRendering="auto" />
      </svg>
      <svg className="absolute bottom-[21px] left-[22px]" width="94" height="92" fill="none" stroke="#000" shapeRendering="crispEdges" aria-hidden="true">
        <path d="M5.5 21v64.5H70M0.5 79.5h11v11h-11z" />
        <path d="M5 0.5l7.5 5.500 7.500-5.500M12.500 6v8M78 72l14 14M92 72L78 86" shapeRendering="auto" />
      </svg>
      <div className="absolute top-[580px] left-[733px] w-[85px]">
        <div className="flex h-6 items-center bg-[#f6f6f8] pl-[6px] text-xs text-[#666]">
          <label htmlFor="dyn">合并(J)</label>
          <svg width="26" height="10" className="ml-3" fill="#8c8c8c" aria-hidden="true"><path d="M7 0v10L1 5zM20 0v10l6-5z" /></svg>
        </div>
        <div className="flex items-center">
          <span className="flex w-5 justify-center"><Icon name="pencil" /></span>
          <input
            id="dyn"
            defaultValue="j"
            className="h-[21px] w-[65px] border border-l-4 border-[#5c5c62] border-l-[#44546c] bg-white text-[13px] text-black outline-none"
          />
        </div>
        <span className="absolute bottom-[3px] left-[28px] h-[15px] w-px bg-black" />
      </div>
    </div>
  );
}

function SheetTab({ label, active }: { label: string; active?: boolean }) {
  return (
    <button className={`relative -mr-px h-4 text-xs leading-4 ${active ? "px-[10px] font-bold text-black" : "px-[7px] text-[#707070]"}`}>
      <svg className="absolute inset-0 h-full w-full" viewBox="0 0 44 16" preserveAspectRatio="none" aria-hidden="true">
        <path d="M0 0l8 15.5h28L44 0" fill={active ? "#fff" : "#dcdcdc"} stroke="#777" vectorEffect="non-scaling-stroke" />
      </svg>
      <span className="relative">{label}</span>
    </button>
  );
}

function Document() {
  return (
    <div className="ml-[2px] flex min-w-0 flex-1 flex-col border-l-2 border-[#dfe3e9] bg-[#a4acb4]">
      <div className="flex h-[21px] items-end bg-linear-to-b from-[#98a2af] to-[#c3c8ce]">
        <button className="relative flex h-[18px] w-[114px] items-center justify-between pr-1 pl-[9px] font-['Roboto',sans-serif] text-[13px] font-bold text-black">
          <svg className="absolute inset-0" width="114" height="18" aria-hidden="true">
            <path d="M0 18L7 3Q9 0 12 0h92q4 0 5 3l5 15z" fill="#fbdf7c" />
          </svg>
          <span className="relative">Drawing1.dwg</span>
          <svg className="relative" width="9" height="9" stroke="#4a4a4a" fill="none" aria-hidden="true"><path d="M1 1l7 7M8 1L1 8" /></svg>
        </button>
        <span className="mb-[6px] ml-auto pr-[5px] text-[#444]">
          <svg width="10" height="5" fill="currentColor" aria-hidden="true"><path d="M0 0h10L5 5z" /></svg>
        </span>
      </div>
      <div className="flex min-h-0 flex-1 flex-col border-t-2 border-r-4 border-b-2 border-[#e6e9ee]">
        <div className="flex flex-1 border-y border-l border-[#6e6e6e]">
          <Canvas />
          <div className="flex w-[15px] flex-col items-center bg-[#f0f0f0]">
            <button aria-label="上" className="flex h-4 items-center"><Chevron dir="up" /></button>
            <span className="flex-[311]" />
            <span className="h-4 w-full bg-[#cdcdcd]" />
            <span className="flex-[268]" />
            <button aria-label="下" className="flex h-4 items-center"><Chevron dir="down" /></button>
          </div>
        </div>
        <div className="flex h-5 border-b-2 border-[#a4acb4]">
          <div className="flex flex-[692] items-start">
            <div className="flex h-4 w-[66px] items-center justify-between pr-[7px] pl-[2px]">
              {["M1 0v7M7 0v7L3 3.5z", "M6 0v7L2 3.5z", "M2 0v7l4-3.5z", "M7 0v7M1 0v7l4-3.5z"].map((d) => (
                <button key={d} aria-label="切换布局">
                  <svg width="8" height="7" fill="#fff" stroke="#fff" strokeWidth="0.6" aria-hidden="true"><path d={d} /></svg>
                </button>
              ))}
            </div>
            <SheetTab label="模型" active />
            <SheetTab label="布局1" />
            <SheetTab label="布局2" />
            <SheetTab label="+" />
          </div>
          <span className="mr-[2px] h-[13px] w-[2px] self-center bg-[#f0f0f0]" />
          <div className="flex flex-[647] items-center bg-[#f0f0f0]">
            <button aria-label="左" className="flex w-4 justify-center"><Chevron dir="left" /></button>
            <span className="flex-[309]" />
            <span className="h-[14px] w-[17px] bg-[#cdcdcd]" />
            <span className="flex-[287]" />
            <button aria-label="右" className="flex w-4 justify-center"><Chevron dir="right" /></button>
          </div>
          <span className="w-[18px]" />
        </div>
      </div>
    </div>
  );
}

/* ---------- command window ---------- */

// CJK at 14px, half-width characters a size down
function Mono({ text }: { text: string }) {
  return (
    <>
      {text.split(/([\x20-\x7e]+)/).map((part, i) =>
        /^[\x20-\x7e]/.test(part) ? <span key={i} className="text-xs">{part}</span> : part
      )}
    </>
  );
}

function CommandWindow() {
  return (
    <section className="flex bg-[#3a4b65]">
      <div className="flex w-[19px] flex-col items-center gap-2 pt-[6px] text-white">
        <button aria-label="关闭"><svg width="9" height="9" fill="none" stroke="currentColor"><path d="M1 1l7 7M8 1L1 8" strokeWidth="1.5" /></svg></button>
        <button aria-label="固定"><svg width="9" height="10" fill="none" stroke="currentColor"><path d="M2.5 0.5h4v5h-4zM1 6h7M4.5 6v4" /></svg></button>
      </div>
      <div className="mr-[3px] flex-1 border-t border-l border-[#6e6e6e] bg-white pb-[2px] font-['DejaVu_Sans_Mono','Noto_Sans_CJK_SC',monospace] text-sm leading-[18px] whitespace-pre text-black">
        <div className="flex">
          <div className="flex-1 pl-[2px]">
            <p><Mono text="选择对象:" /></p>
            <p><Mono text="是否将直线、圆弧和样条曲线转换为多段线? [是(Y)/否(N)]? <Y>" /></p>
          </div>
          <div className="flex w-[15px] flex-col items-center justify-between bg-[#f0f0f0] py-1">
            <Chevron dir="up" />
            <Chevron dir="down" />
          </div>
        </div>
        <div className="flex items-center border-t border-[#6e6e6e]">
          <label htmlFor="cmd" className="pl-[2px]">
            <Mono text="输入选项 [闭合(C)/打开(O)/合并(J)/宽度(W)/拟合(F)/样条曲线(S)/非曲线化(D)/线型生成(L)/反转(R)/放弃(U)]:" />
          </label>
          <input id="cmd" className="h-[18px] min-w-0 flex-1 outline-none" />
          <div className="mr-[15px] flex h-4 w-20 items-center bg-[#f0f0f0]">
            <span className="flex w-[17px] justify-center"><Chevron dir="left" /></span>
            <span className="h-4 w-[17px] bg-[#cdcdcd]" />
            <span className="mr-1 ml-auto"><Chevron dir="right" /></span>
          </div>
        </div>
      </div>
    </section>
  );
}

/* ---------- status bar ---------- */

function Toggle({ label, on }: { label: string; on?: boolean }) {
  return (
    <button
      className={`h-[18px] border px-[2px] whitespace-nowrap ${on ? "border-[#e8b84c] bg-[#fbe19a] text-[#2c2c2c]" : "border-transparent text-white"}`}
    >
      {label}
    </button>
  );
}

function StatusBar() {
  return (
    <div className="flex h-6 bg-[#8c9097] text-[13px] leading-[14px]">
      <div className="flex w-[260px] shrink-0 items-center pl-[3px] font-['Noto_Sans',sans-serif] text-[11px] text-white">
        1656.4585, -758.4389, 0
      </div>
      <div className="flex items-center pb-px">
        <Toggle label="捕捉" />
        <Toggle label="栅格" />
        <Toggle label="正交" />
        <Toggle label="极轴" />
        <Toggle label="对象捕捉" on />
        <Toggle label="对象追踪" />
        <Toggle label="线宽" />
        <Toggle label="动态输入" on />
        <Toggle label="对称画线" />
        <Toggle label="拾取对称轴" />
        <Toggle label="自动图层" />
        <Toggle label="放大镜" />
        <Toggle label="模型" on />
        <span className="ml-[2px]"><Icon name="anno" /></span>
        <button className="flex w-[29px] items-center justify-center gap-1 font-['Noto_Sans',sans-serif] text-[11px] text-white">
          1:1
          <svg width="6" height="5" fill="none" stroke="currentColor" aria-hidden="true"><path d="M0.5 1l2.5 2.5L5.5 1" /></svg>
        </button>
        <span className="mr-[6px] ml-[3px]"><Icon name="annobulb" /></span>
        <span className="mr-1"><Icon name="annoauto" /></span>
        <Toggle label="透明度" on />
        <Toggle label="选择循环" />
      </div>
      <div className="ml-auto flex w-[195px] items-center bg-[#f3f4f7] pl-[10px]">
        <Icon name="cog" />
        <span className="mr-2 ml-1"><Icon name="lock" /></span>
        <Icon name="bulbSm" />
        <span className="mx-[6px]"><Icon name="hw" /></span>
        <Icon name="clean" />
        <span className="mx-[6px]"><Icon name="warn" /></span>
        <span className="font-['Noto_Sans',sans-serif] text-[11px] text-[#333]">GstarCAD</span>
      </div>
    </div>
  );
}

/* ---------- windows taskbar ---------- */

const bird = <path d="M6 6c4 3 9 3 13 6-1 2-1 3-3 4l1 1-4 4 1-4c-3-2-5-4-5-6l2 0c-3-1-4-3-5-5z" fill="#fff" />;

function AppIcon({ name }: { name: string }) {
  return (
    <svg width="24" height="24" viewBox="0 0 24 24" fill="none" className="shrink-0" aria-hidden="true">
      {APPS[name]}
    </svg>
  );
}

const APPS: Record<string, ReactNode> = {
  start: <path d="M4 6.2l6.8-1v6.3H4zM11.7 5L20 3.8v7.7h-8.3zM4 12.5h6.8v6.3L4 17.8zM11.7 12.5H20v7.7L11.7 19z" fill="#fff" />,
  fan: (
    <>
      <g fill="#fff">
        <circle cx="8" cy="7" r="5" />
        <circle cx="17" cy="8" r="5" />
        <circle cx="16" cy="17" r="5" />
        <circle cx="7" cy="16" r="5" />
      </g>
      <g stroke="#04426f" strokeWidth="1.6">
        <path d="M12 12C8 13 5 11 4 8M12 12C11 8 13 5 16 4M12 12c4-1 7 1 8 4M12 12c1 4-1 7-4 8" />
      </g>
    </>
  ),
  wps: (<><rect x="2" y="2" width="20" height="20" rx="2" fill="#3f83f2" /><path d="M5 8h12M6 8l3 8 3-6 3 6 4-8h-4" stroke="#fff" strokeWidth="1.8" /></>),
  ding: (<><circle cx="12" cy="12" r="12" fill="#2a8be8" />{bird}</>),
  search: (<><circle cx="14" cy="9" r="6.5" stroke="#f0861c" strokeWidth="3.5" /><path d="M9.5 14L3 21" stroke="#f0861c" strokeWidth="4" strokeLinecap="round" /></>),
  wechat: (
    <>
      <ellipse cx="9" cy="9.5" rx="8.5" ry="7" fill="#6fd04b" /><path d="M3 14v5l5-3z" fill="#6fd04b" />
      <circle cx="6" cy="8" r="1.2" fill="#2c5f22" /><circle cx="12" cy="8" r="1.2" fill="#2c5f22" />
      <ellipse cx="17" cy="15" rx="7" ry="6" fill="#eef0f2" /><path d="M18 19l5 3-1-5z" fill="#eef0f2" />
      <circle cx="15" cy="14" r="1" fill="#666" /><circle cx="19.5" cy="14" r="1" fill="#666" />
    </>
  ),
  sketchup: (<><path d="M2 4l13-3 7 3-1 17-10 2-6-4z" fill="#e02b2b" /><path d="M6 8l7-3 5 2v3l-5-2-4 2 9 4v4l-6 3v-4l3-1-9-4z" fill="#fff" /></>),
  photo: (
    <>
      <path d="M12 0l10 6v12l-10 6-10-6V6z" fill="#8a86f0" />
      <path d="M12 0l10 6v6L2 9V6z" fill="#5fb4f5" fillOpacity="0.7" />
      <path d="M4 17l5-7 4 5 2-2 5 5z" fill="#e8edff" /><circle cx="15" cy="8" r="2" fill="#e8edff" />
    </>
  ),
  browser: (<><circle cx="11.5" cy="11" r="8.5" stroke="#2f9df0" strokeWidth="5" /><path d="M12 20c0-3 3-4 5-3 3-1 6 1 6 4 0 2-2 3-4 3h-6c-3 0-3-4-1-4z" fill="#fff" /></>),
  gstar: (<><rect width="24" height="24" rx="3" fill="#eef2fa" /><g transform="translate(2 2)"><path d={G_MARK} fill="#2f4fd0" /></g></>),
  pen: (<><path d="M5 5h14v14H5z" fill="#fff" /><path d="M10 12l3 2 7-8M5 13l5 6" stroke="#11395f" strokeWidth="1.600" /></>),
  chat: (<><rect x="4" y="4" width="14" height="14" rx="3" fill="#2b9bf0" /><path d="M11 6v9M7 8l8 5M15 8l-8 5" stroke="#fff" strokeWidth="2" /><path d="M11 13h9v6h-5l-2 2v-2h-2z" fill="#f7cf3b" /></>),
  plus: (<><circle cx="12" cy="12" r="8" fill="#f5cf24" /><path d="M12 4a8 8 0 0 0 0 16" fill="#7fc23c" /><path d="M12 8v8M8 12h8" stroke="#185a2c" strokeWidth="2.5" /></>),
  speaker: (<><path d="M4 9h4l6-5v16l-6-5H4z" fill="#d55a43" /><path d="M14 4v16l-5-5V9z" fill="#f0b5a5" /><path d="M17 8c2 2 2 6 0 8" stroke="#5b3b3b" strokeWidth="2" /></>),
  nvidia: (<><path d="M4 5h16v14H4z" fill="#2a3318" /><path d="M5 12c4-6 10-6 14 0-4 5-10 5-14 0z" fill="#77b900" /><circle cx="12" cy="12" r="2.5" stroke="#2a3318" /></>),
  plane: (<><circle cx="12" cy="12" r="8" fill="#4a9bf5" /><path d="M7 7l10 3-4 2-1 5z" fill="#fff" /></>),
  shield: (<><path d="M12 4l7 2v6c0 4-3 7-7 8-4-1-7-4-7-8V6z" fill="#f49b23" /><path d="M13 5l-5 6 0 5 6-5z" fill="#fff" /><path d="M15 9l-3 9 4-3 2-5z" fill="#ffe2b0" /></>),
  panel: (<><path d="M4 6h16v13H4z" fill="#fff" /><path d="M6 11h12v6H6z" fill="#f5a623" /><path d="M5 8h10" stroke="#222" strokeDasharray="2 1" /><circle cx="18" cy="6" r="2.5" fill="#ef4136" /></>),
  flower: (
    <g fill="#f2a0ac">
      <circle cx="12" cy="7.5" r="3.5" /><circle cx="7.5" cy="11" r="3.5" /><circle cx="16.5" cy="11" r="3.5" />
      <circle cx="9.5" cy="16" r="3.5" /><circle cx="14.5" cy="16" r="3.5" /><circle cx="12" cy="12" r="3" fill="#fbd3d8" />
      <path d="M9 12h6" stroke="#c0566a" />
    </g>
  ),
  wifi: (<g stroke="#e6eef6" strokeWidth="1.3"><path d="M6 18C6 11 11 6 18 6M9 18c0-5 4-9 9-9M12 18c0-3 3-6 6-6" /><circle cx="16.5" cy="16.5" r="1.5" fill="#fff" /></g>),
  mic: (<><rect x="9" y="4" width="6" height="11" rx="3" fill="#fff" /><path d="M7 12c0 6 10 6 10 0M12 17v3M8.5 20h7" stroke="#fff" strokeWidth="1.5" /></>),
  rpaint: (<><path d="M5 18C6 9 9 6 12 6M9 12c3 0 4 4 6 6" stroke="#3f9b52" strokeWidth="3" /><circle cx="15" cy="9" r="4" fill="#f08a5c" /><circle cx="15" cy="9" r="2" fill="#ffe9dc" /></>),
  volume: (<g stroke="#fff" strokeWidth="1.2"><path d="M4 10h3l4-4v12l-4-4H4zM13.5 9.5c1.5 1.5 1.500 3.500 0 5M16 8c2.500 2 2.500 6 0 8M18.500 6c3 3 3 9 0 12" /></g>),
  notify: (<><path d="M3 4h16v12h-9l-4 4v-4H3z" fill="#fff" /><path d="M6 7.5h10M6 10h10M6 12.5h7" stroke="#08467a" /></>),
};

const TASKS = [
  { icon: "sketchup", label: "无标题 - ..." },
  { icon: "photo", label: "2.jpg - ..." },
  { icon: "browser", label: "电影频道 ..." },
  { icon: "browser", label: "合并多段..." },
  { icon: "ding", label: "钉钉" },
];

const TRAY = ["chat", "plus", "speaker", "nvidia", "plane", "shield", "panel", "flower"];

function TaskBar() {
  return (
    <footer className="flex h-10 bg-[#04426f] text-xs text-white">
      <button aria-label="开始" className="flex w-12 items-center justify-center"><AppIcon name="start" /></button>
      <button aria-label="fan" className="flex w-[52px] items-center justify-center"><AppIcon name="fan" /></button>
      <div className="flex w-[185px] pl-1">
        {["wps", "ding", "search", "wechat"].map((a) => (
          <button key={a} aria-label={a} className="flex w-11 items-center justify-center"><AppIcon name={a} /></button>
        ))}
      </div>
      <div className="flex gap-[9px]">
        {TASKS.map((t) => (
          <button key={t.label} className="flex w-[98px] items-center gap-[3px] border-b-2 border-[#8fc6f5] pl-1 text-[13px] whitespace-nowrap">
            <AppIcon name={t.icon} />
            {t.label}
          </button>
        ))}
      </div>
      <button className="ml-1 flex w-[106px] items-center gap-1 border-b-2 border-[#8fc6f5] bg-[#045a9e] pl-2 text-[13px] whitespace-nowrap">
        <AppIcon name="gstar" />
        浩辰CAD...
      </button>
      <button aria-label="pen" className="ml-[7px] flex items-center"><AppIcon name="pen" /></button>
      <div className="ml-auto flex items-center">
        {TRAY.map((t) => <AppIcon key={t} name={t} />)}
        <span className="ml-[25px] flex">
          {["wifi", "mic", "rpaint", "volume"].map((t) => <AppIcon key={t} name={t} />)}
        </span>
        <span className="ml-1 flex h-[22px] w-[22px] items-center justify-center rounded-full border-2 border-[#1fd07c] text-[13px]">22</span>
        <div className="ml-3 w-[58px] text-center font-['Noto_Sans',sans-serif] text-xs leading-[19px]">
          <p>14:15</p>
          <p>2020/5/2</p>
        </div>
        <div className="relative ml-5">
          <AppIcon name="notify" />
          <span className="absolute right-0 -bottom-1 flex h-4 w-4 items-center justify-center rounded-full border border-[#6d9cc2] bg-[#0d5a94] text-[11px] font-bold">2</span>
        </div>
        <span className="ml-[11px] h-10 w-px bg-[#5d87a8]" />
        <span className="w-1" />
      </div>
    </footer>
  );
}

export default function App() {
  return (
    <div className="flex min-h-screen flex-col overflow-x-hidden bg-[#808080] font-['Open_Sans','Noto_Sans_CJK_SC',sans-serif]">
      <div className="relative">
        <TitleBar />
        <MenuBar />
        <span className="absolute top-[5px] left-[5px] flex h-[35px] w-[35px] items-center justify-center rounded-full border border-[#a9a9a9] bg-[#e9eaee]">
          <svg width="24" height="24" viewBox="0 0 20 20" aria-hidden="true">
            <path d={G_MARK} fill="#2f4fd0" />
          </svg>
        </span>
      </div>
      <StandardBar />
      <span className="h-[2px] bg-[#808080]" />
      <LayerBar />
      <span className="h-[2px] bg-[#a0a0a0]" />
      <main className="flex min-h-[560px] flex-1">
        <SideBar tools={DRAW} />
        <Document />
        <span className="w-[2px]" />
        <SideBar tools={MODIFY} />
        <span className="w-[2px]" />
        <SideBar tools={ORDER} />
      </main>
      <span className="h-[5px] bg-[#30384a]" />
      <CommandWindow />
      <StatusBar />
      <TaskBar />
    </div>
  );
}
